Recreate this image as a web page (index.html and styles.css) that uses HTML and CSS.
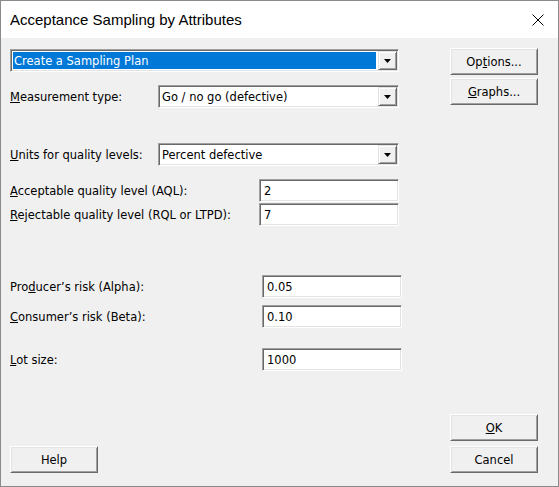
FILE: index.html
```html
<!DOCTYPE html>
<html>
<head>
<meta charset="utf-8">
<title>Acceptance Sampling by Attributes</title>
<link rel="stylesheet" href="styles.css">
</head>
<body>
<div class="window">
  <div class="titlebar">
    <span class="title">Acceptance Sampling by Attributes</span>
    <svg class="close" width="12" height="12" viewBox="0 0 12 12"><path d="M0.5 0.5 L11.5 11.5 M11.5 0.5 L0.5 11.5" stroke="#000" stroke-width="1" fill="none"/></svg>
  </div>
  <div class="content">
    <div class="leftcol">
      <div class="combo combo-main sunken">
        <div class="combo-value selected">Create a Sampling Plan</div>
        <div class="drop"><svg width="7" height="4" viewBox="0 0 7 4"><polygon points="0,0 7,0 3.5,4" fill="#000"/></svg></div>
      </div>

      <div class="row row-measure">
        <span class="label lbl-combo"><u>M</u>easurement type:</span>
        <div class="combo combo-sub sunken">
          <div class="combo-value">Go / no go (defective)</div>
          <div class="drop"><svg width="7" height="4" viewBox="0 0 7 4"><polygon points="0,0 7,0 3.5,4" fill="#000"/></svg></div>
        </div>
      </div>

      <div class="row row-units">
        <span class="label lbl-combo"><u>U</u>nits for quality levels:</span>
        <div class="combo combo-sub sunken">
          <div class="combo-value">Percent defective</div>
          <div class="drop"><svg width="7" height="4" viewBox="0 0 7 4"><polygon points="0,0 7,0 3.5,4" fill="#000"/></svg></div>
        </div>
      </div>

      <div class="row row-aql">
        <span class="label lbl-quality"><u>A</u>cceptable quality level (AQL):</span>
        <div class="field sunken">2</div>
      </div>

      <div class="row row-rql">
        <span class="label lbl-quality"><u>R</u>ejectable quality level (RQL or LTPD):</span>
        <div class="field sunken">7</div>
      </div>

      <div class="row row-alpha">
        <span class="label lbl-risk">Pro<u>d</u>ucer’s risk (Alpha):</span>
        <div class="field sunken">0.05</div>
      </div>

      <div class="row row-beta">
        <span class="label lbl-risk"><u>C</u>onsumer’s risk (Beta):</span>
        <div class="field sunken">0.10</div>
      </div>

      <div class="row row-lot">
        <span class="label lbl-risk"><u>L</u>ot size:</span>
        <div class="field sunken">1000</div>
      </div>

      <div class="btn btn-help">Help</div>
    </div>

    <div class="rightcol">
      <div class="btn">Op<u>t</u>ions...</div>
      <div class="btn btn-graphs"><u>G</u>raphs...</div>
      <div class="btn btn-ok"><u>O</u>K</div>
      <div class="btn btn-cancel">Cancel</div>
    </div>
  </div>
</div>
</body>
</html>
```

FILE: styles.css
```css
* { box-sizing: border-box; }

html, body {
  margin: 0;
  padding: 0;
}

body {
  width: 559px;
  height: 487px;
  background: #f0f0f0;
  font-family: "DejaVu Sans", Verdana, sans-serif;
  font-size: 11.5px;
  color: #000;
}

.window {
  width: 559px;
  height: 487px;
  border: 1px solid #8a8a8a;
  display: flex;
  flex-direction: column;
  background: #f0f0f0;
}

.titlebar {
  flex: none;
  height: 37px;
  background: #fff;
  display: flex;
  align-items: center;
  justify-content: space-between;
  padding: 0 14px 0 9px;
}

.title {
  font-family: "Liberation Sans", Arial, sans-serif;
  font-size: 15px;
  color: #000;
}

.close {
  display: block;
}

.content {
  flex: 1;
  display: flex;
  padding: 10px 20px 13px 9px;
}

.leftcol {
  width: 392px;
  display: flex;
  flex-direction: column;
  padding-top: 1px;
}

.rightcol {
  margin-left: auto;
  width: 88px;
  display: flex;
  flex-direction: column;
}

.sunken {
  border: 1px solid;
  border-color: #a0a0a0 #fff #fff #a0a0a0;
  box-shadow: inset 1px 1px #696969, inset -1px -1px #e3e3e3;
  padding: 1px;
  background: #fff;
}

.combo {
  height: 23px;
  display: flex;
}

.combo-main {
  width: 389px;
}

.combo-sub {
  width: 241px;
}

.combo-value {
  flex: 1;
  display: flex;
  align-items: center;
  padding-left: 2px;
  white-space: nowrap;
  overflow: hidden;
}

.combo-value.selected {
  background: #0078d7;
  color: #fff;
  margin: 0 1px 0 0;
  border: 1px solid #fff;
  padding-left: 1px;
}

.drop {
  width: 19px;
  flex: none;
  display: flex;
  align-items: center;
  justify-content: center;
  background: #f0f0f0;
  border: 1px solid;
  border-color: #e3e3e3 #696969 #696969 #e3e3e3;
  box-shadow: inset 1px 1px #fff, inset -1px -1px #a0a0a0;
}

.drop svg {
  display: block;
}

.row {
  display: flex;
  align-items: center;
}

.label {
  flex: none;
  white-space: nowrap;
}

.lbl-combo { width: 148px; }
.lbl-quality { width: 249px; }
.lbl-risk { width: 252px; }

.field {
  width: 140px;
  height: 23px;
  display: flex;
  align-items: center;
  padding-left: 4px;
}

.row-measure { margin-top: 13px; }
.row-units { margin-top: 35px; }
.row-aql { margin-top: 13px; }
.row-rql { margin-top: 1px; }
.row-alpha { margin-top: 49px; }
.row-beta { margin-top: 7px; }
.row-lot { margin-top: 20px; }

.btn {
  width: 88px;
  height: 27px;
  display: flex;
  align-items: center;
  justify-content: center;
  background: #f0f0f0;
  border: 1px solid;
  border-color: #fff #696969 #696969 #fff;
  box-shadow: inset 1px 1px #e3e3e3, inset -1px -1px #a0a0a0;
  white-space: nowrap;
}

.btn-help {
  margin-top: auto;
}

.btn-graphs {
  margin-top: 3px;
}

.btn-ok {
  margin-top: auto;
}

.btn-cancel {
  margin-top: 5px;
}
```
